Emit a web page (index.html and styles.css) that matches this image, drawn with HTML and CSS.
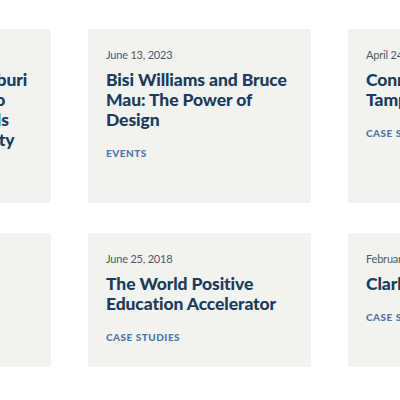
FILE: index.html
```html
<!DOCTYPE html>
<html lang="en">
<head>
    <meta charset="UTF-8">
    <meta name="viewport" content="width=device-width, initial-scale=1.0">
    <title>News &amp; Events</title>
    <link rel="stylesheet" href="styles.css">
</head>
<body>

    <!-- Post grid (scrolled carousel, partly off screen) -->
    <div class="post-grid">

        <div class="post-card">
            <div class="post-date">July 7, 2023</div>
            <div class="post-title">Dr. Nkechi Onyemaburi<br>Discusses a Route to<br>Re-imagining Models<br>for Urban Community</div>
            <div class="post-tag">Events</div>
        </div>

        <div class="post-card">
            <div class="post-date">June 13, 2023</div>
            <div class="post-title">Bisi Williams and Bruce Mau: The Power of Design</div>
            <div class="post-tag">Events</div>
        </div>

        <div class="post-card">
            <div class="post-date">April 24, 2023</div>
            <div class="post-title">Connecting<br>Tampa Bay</div>
            <div class="post-tag">Case Studies</div>
        </div>

        <div class="post-card">
            <div class="post-date">October 2, 2018</div>
            <div class="post-title">Building a Better<br>Civic Future</div>
            <div class="post-tag">Case Studies</div>
        </div>

        <div class="post-card">
            <div class="post-date">June 25, 2018</div>
            <div class="post-title">The World Positive Education Accelerator</div>
            <div class="post-tag">Case Studies</div>
        </div>

        <div class="post-card">
            <div class="post-date">February 8, 2018</div>
            <div class="post-title">Clark</div>
            <div class="post-tag">Case Studies</div>
        </div>

    </div>

</body>
</html>
```

FILE: styles.css
```css
/* Post cards */
body {
    margin: 0;
    background: #fff;
    font-family: Lato, "Open Sans", sans-serif;
    overflow: hidden;
}

.post-grid {
    display: grid;
    grid-template-columns: repeat(3, 223px);
    column-gap: 37px;
    row-gap: 30px;
    padding-top: 29px;
    margin-left: -172px;
}

.post-card {
    background: #f2f2ee;
    padding: 17px 18px 23px;
}

.post-date {
    font-size: 11px;
    line-height: 18px;
    letter-spacing: -0.2px;
    color: #4f5b68;
}

.post-title {
    margin-top: 6px;
    font-size: 17.5px;
    line-height: 20px;
    font-weight: 900;
    letter-spacing: -0.1px;
    color: #1a3d5e;
}

.post-tag {
    margin-top: 16px;
    font-size: 10px;
    line-height: 14px;
    font-weight: 900;
    letter-spacing: 0.5px;
    text-transform: uppercase;
    color: #4a78b2;
}
```
